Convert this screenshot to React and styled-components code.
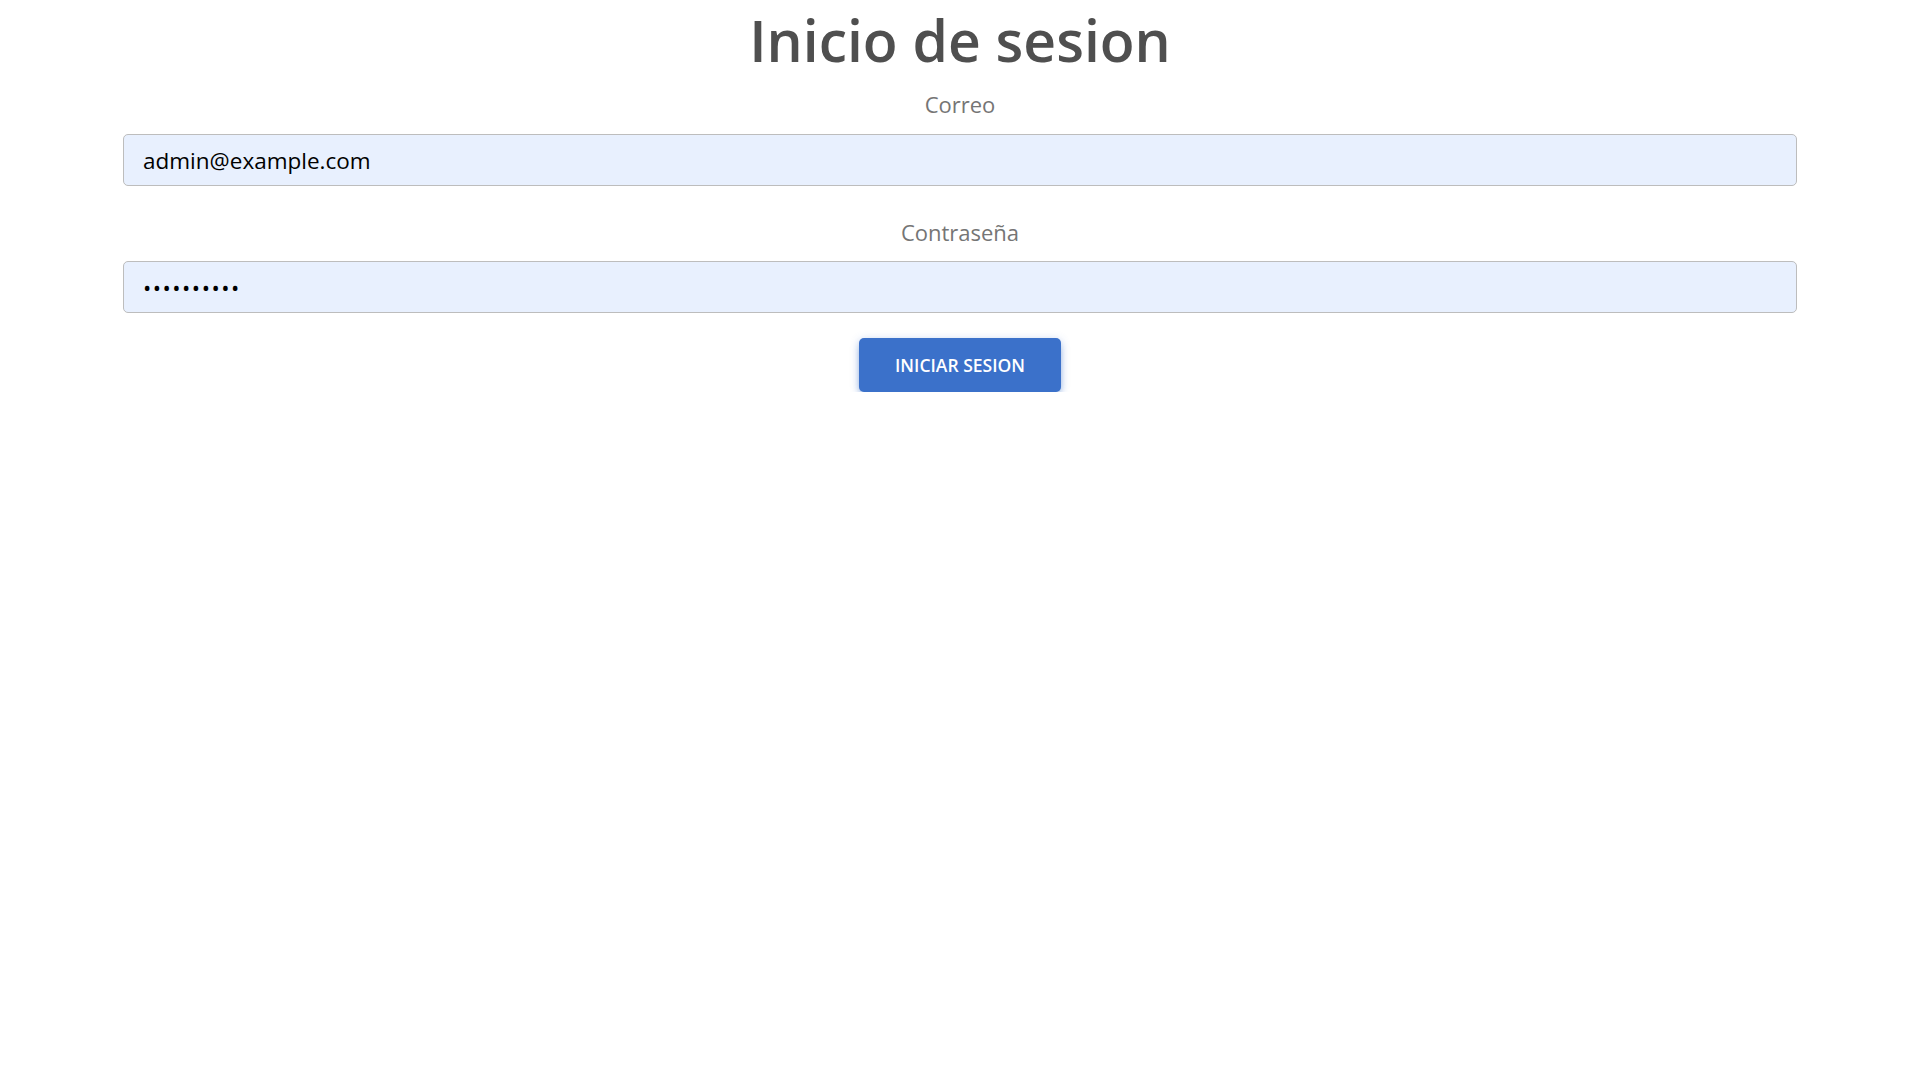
import React, { useState } from 'react';
import styled, { createGlobalStyle } from 'styled-components';

const GlobalStyle = createGlobalStyle`
  html, body {
    margin: 0;
    padding: 0;
    background: #ffffff;
    font-family: "Open Sans", "Noto Sans", "Liberation Sans", sans-serif;
  }
`
const Page = styled.div`
  display: flex;
  flex-direction: column;
  align-items: center;
  padding: 0 123px;
`
const Title = styled.h1`
  margin: 0;
  font-size: 57px;
  line-height: 80px;
  font-weight: 600;
  color: #4f4f4f;
`
const Form = styled.form`
  width: 100%;
  display: flex;
  flex-direction: column;
  align-items: center;
`
const Label = styled.label`
  font-size: 22px;
  line-height: 30px;
  color: #757575;
  margin: ${(p) => (p.first ? '9px 0 15px' : '31px 0 14px')};
`
const Input = styled.input`
  box-sizing: border-box;
  width: 100%;
  height: 52px;
  padding: 0 19px;
  border: 1px solid #bdbdbd;
  border-radius: 5px;
  background: #e8f0fe;
  font-family: inherit;
  font-size: ${(p) => (p.type === 'password' ? '22px' : '22.5px')};
  letter-spacing: ${(p) => (p.type === 'password' ? '1.5px' : 'normal')};
  color: #000;
  &:focus {
    outline: none;
  }
`
const SubmitButton = styled.button`
  margin-top: 25px;
  width: 202px;
  height: 54px;
  border: none;
  border-radius: 5px;
  background: #3b71ca;
  color: #ffffff;
  font-family: inherit;
  font-size: 17.5px;
  font-weight: 600;
  text-transform: uppercase;
  box-shadow: 0 4px 9px -4px #3b71ca, 0 2px 10px rgba(59, 113, 202, 0.3);
  cursor: pointer;
`

const App = () => {
  const [email, setEmail] = useState('admin@example.com');
  const [password, setPassword] = useState('1234567890');

  return (
    <Page>
      <GlobalStyle />
      <Title>Inicio de sesion</Title>
      <Form onSubmit={(e) => e.preventDefault()}>
        <Label first>Correo</Label>
        <Input
          type='email'
          value={email}
          onChange={(e) => setEmail(e.target.value)}
        />
        <Label>Contraseña</Label>
        <Input
          type='password'
          value={password}
          onChange={(e) => setPassword(e.target.value)}
        />
        <SubmitButton type='submit'>Iniciar sesion</SubmitButton>
      </Form>
    </Page>
  );
}

export default App;
